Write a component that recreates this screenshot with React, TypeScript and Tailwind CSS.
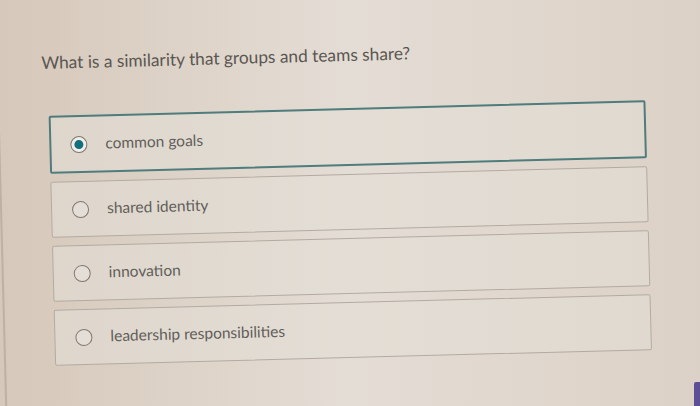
const options = [
  { label: 'common goals', selected: true },
  { label: 'shared identity', selected: false },
  { label: 'innovation', selected: false },
  { label: 'leadership responsibilities', selected: false },
];

function Radio({ checked }: { checked: boolean }) {
  if (checked) {
    return (
      <span className="flex h-[17px] w-[17px] items-center justify-center rounded-full border-[1.5px] border-[#7d7770] bg-[#f1ede8]">
        <span className="h-[9px] w-[9px] rounded-full bg-[#11707c]" />
      </span>
    );
  }
  return <span className="h-[17px] w-[17px] rounded-full border-[1.5px] border-[#807972] bg-[#e4ded7]" />;
}

export default function App() {
  return (
    <div className="relative h-[406px] w-[700px] overflow-hidden bg-gradient-to-r from-[#d6c8ba] via-[#e4ddd5] to-[#dcd1c6] font-['Lato','Open_Sans',sans-serif]">
      <div className="h-full w-full rotate-[-1.5deg] border-l-2 border-[#9a8f84]/40">
        <div className="pl-[43px] pt-[43px]">
          <h1 className="text-[17.3px] leading-6 text-[#5a5652]">What is a similarity that groups and teams share?</h1>
        </div>
        <div className="mt-[41px] flex w-[646px] flex-col gap-2 pl-[49px]">
          {options.map((o) => (
            <div
              key={o.label}
              className={
                o.selected
                  ? 'flex h-[58px] items-center rounded-[2px] border-2 border-[#4f7c7c] bg-[#e3ddd6]/60 pl-[19px]'
                  : 'flex h-[56px] items-center rounded-[2px] border border-[#b3aba2] bg-[#e3ddd6]/60 pl-[20px]'
              }
            >
              <Radio checked={o.selected} />
              <span className="ml-[18px] text-[15.5px] text-[#625e5a]">{o.label}</span>
            </div>
          ))}
        </div>
      </div>
      <div className="absolute bottom-0 right-0 h-[24px] w-[6px] rounded-tl-[2px] bg-[#5d4f93]" />
    </div>
  );
}
